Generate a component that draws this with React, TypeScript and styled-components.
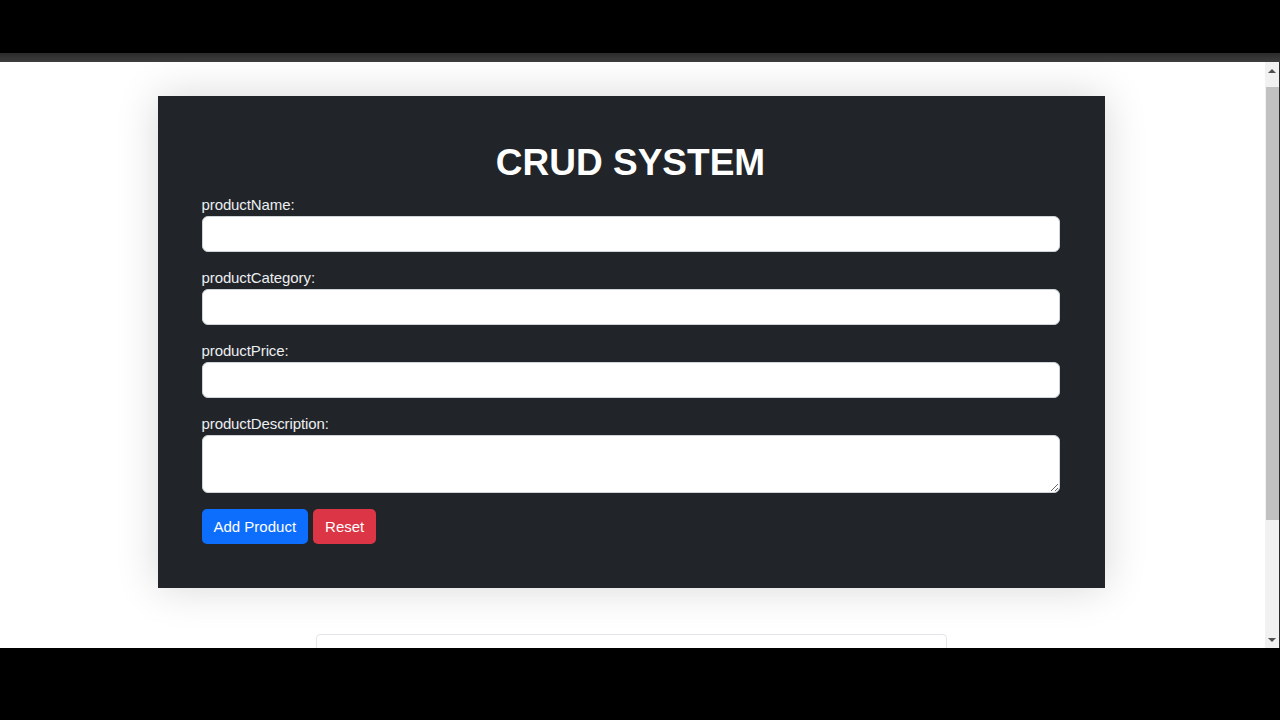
import React from "react";
import styled, { createGlobalStyle } from "styled-components";

const Global = createGlobalStyle`
  html, body { margin: 0; padding: 0; background: #000; }
  body { font-family: "Liberation Sans", Arial, sans-serif; }
  * { box-sizing: border-box; }
`;

const Frame = styled.div`
  width: 1280px;
  height: 720px;
  display: flex;
  flex-direction: column;
  background: #000;
  overflow: hidden;
`;

const TopBlack = styled.div`
  height: 53px;
  background: #000;
  flex: none;
`;

const BrowserStrip = styled.div`
  height: 9px;
  background: linear-gradient(#2b2b2b, #3d3d3d);
  flex: none;
`;

const Viewport = styled.div`
  height: 586px;
  flex: none;
  display: flex;
  background: #fff;
`;

const Page = styled.main`
  flex: 1;
  overflow: hidden;
  display: flex;
  flex-direction: column;
  align-items: center;
  padding-top: 34px;
`;

const Card = styled.section`
  width: 947px;
  background: #212529;
  padding: 45px 45px 44px 44px;
  box-shadow: 0 0 40px rgba(0, 0, 0, 0.16);
  display: flex;
  flex-direction: column;
  margin-left: -3px;
`;

const Title = styled.h1`
  margin: 0 0 10px;
  text-align: center;
  color: #ffffff;
  font-size: 37px;
  line-height: 44px;
  font-weight: 700;
  font-family: "Liberation Sans", Arial, sans-serif;
`;

const Field = styled.div`
  display: flex;
  flex-direction: column;
  margin-bottom: 16px;
`;

const Label = styled.label`
  color: #eceef0;
  font-size: 15px;
  line-height: 19px;
  margin-bottom: 2px;
  letter-spacing: -0.1px;
`;

const Input = styled.input`
  height: 36px;
  width: 100%;
  border: 1px solid #ced4da;
  border-radius: 6px;
  background: #fff;
  font-size: 15px;
  padding: 0 12px;
  outline: none;
`;

const TextArea = styled.textarea`
  height: 58px;
  width: 100%;
  border: 1px solid #ced4da;
  border-radius: 6px;
  background: #fff;
  font-size: 15px;
  padding: 6px 12px;
  outline: none;
  font-family: inherit;
  display: block;
`;

const Actions = styled.div`
  display: flex;
  gap: 5px;
`;

const Button = styled.button<{ $variant: "primary" | "danger" }>`
  height: 35px;
  padding: 0 12px 1px;
  border: none;
  border-radius: 5px;
  color: #fff;
  font-size: 15px;
  font-family: "Liberation Sans", Arial, sans-serif;
  background: ${(p) => (p.$variant === "primary" ? "#0d6efd" : "#dc3545")};
  cursor: pointer;
`;

const TableCard = styled.div`
  margin-top: 46px;
  width: 631px;
  height: 40px;
  flex: none;
  background: #fff;
  border: 1px solid #e3e5e8;
  border-radius: 4px;
  margin-left: -2px;
`;

const Scrollbar = styled.div`
  width: 15px;
  flex: none;
  background: #f1f1f1;
  display: flex;
  flex-direction: column;
  align-items: center;
  border-right: 1px solid #2a2a2a;
`;

const Arrow = styled.div<{ $down?: boolean }>`
  height: 17px;
  width: 100%;
  display: flex;
  align-items: center;
  justify-content: center;
  flex: none;
  &::after {
    content: "";
    width: 0;
    height: 0;
    border-left: 4px solid transparent;
    border-right: 4px solid transparent;
    ${(p) =>
      p.$down
        ? "border-top: 4px solid #505050;"
        : "border-bottom: 4px solid #505050;"}
  }
`;

const Thumb = styled.div`
  width: 13px;
  height: 433px;
  margin-top: 8px;
  background: #c1c1c1;
  flex: none;
`;

const Track = styled.div`
  flex: 1;
`;

const BottomBlack = styled.div`
  flex: 1;
  background: #000;
`;

const fields = [
  { id: "productName", label: "productName:" },
  { id: "productCategory", label: "productCategory:" },
  { id: "productPrice", label: "productPrice:" },
];

export default function App() {
  return (
    <>
      <Global />
      <Frame>
        <TopBlack />
        <BrowserStrip />
        <Viewport>
          <Page>
            <Card>
              <Title>CRUD SYSTEM</Title>
              {fields.map((f) => (
                <Field key={f.id}>
                  <Label htmlFor={f.id}>{f.label}</Label>
                  <Input id={f.id} type="text" />
                </Field>
              ))}
              <Field>
                <Label htmlFor="productDescription">productDescription:</Label>
                <TextArea id="productDescription" />
              </Field>
              <Actions>
                <Button $variant="primary">Add Product</Button>
                <Button $variant="danger">Reset</Button>
              </Actions>
            </Card>
            <TableCard />
          </Page>
          <Scrollbar>
            <Arrow />
            <Thumb />
            <Track />
            <Arrow $down />
          </Scrollbar>
        </Viewport>
        <BottomBlack />
      </Frame>
    </>
  );
}
